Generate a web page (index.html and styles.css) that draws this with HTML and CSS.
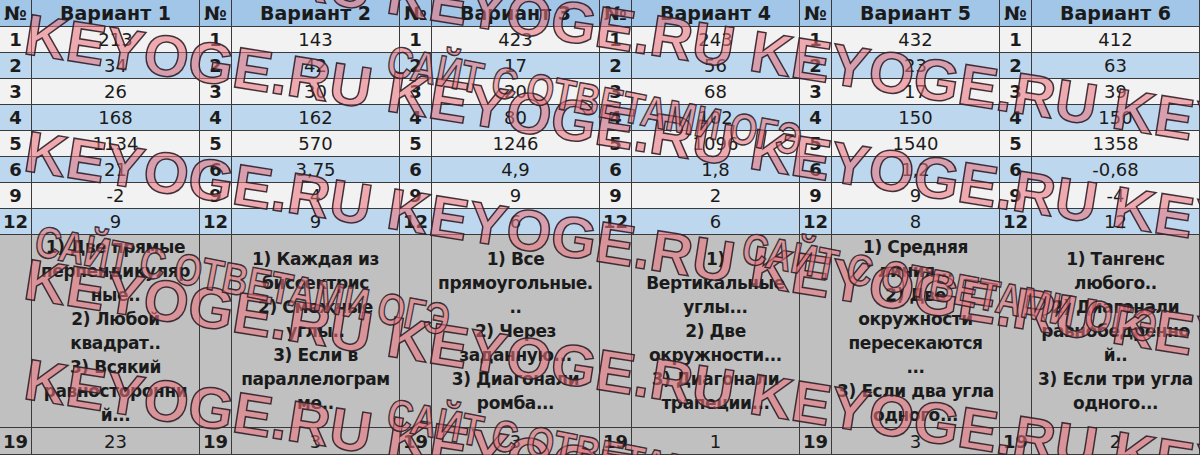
FILE: index.html
```html
<!DOCTYPE html>
<html lang="ru">
<head>
<meta charset="utf-8">
<title>Ответы</title>
<link rel="stylesheet" href="styles.css">
</head>
<body>
<div class="sheet">
  <div class="grid">
    <div class="row hd">
      <div class="c n">№</div><div class="c">Вариант 1</div>
      <div class="c n">№</div><div class="c">Вариант 2</div>
      <div class="c n">№</div><div class="c">Вариант 3</div>
      <div class="c n">№</div><div class="c">Вариант 4</div>
      <div class="c n">№</div><div class="c">Вариант 5</div>
      <div class="c n">№</div><div class="c">Вариант 6</div>
    </div>
    <div class="row w">
      <div class="c n">1</div><div class="c">213</div>
      <div class="c n">1</div><div class="c">143</div>
      <div class="c n">1</div><div class="c">423</div>
      <div class="c n">1</div><div class="c">243</div>
      <div class="c n">1</div><div class="c">432</div>
      <div class="c n">1</div><div class="c">412</div>
    </div>
    <div class="row b">
      <div class="c n">2</div><div class="c">34</div>
      <div class="c n">2</div><div class="c">42</div>
      <div class="c n">2</div><div class="c">17</div>
      <div class="c n">2</div><div class="c">56</div>
      <div class="c n">2</div><div class="c">23</div>
      <div class="c n">2</div><div class="c">63</div>
    </div>
    <div class="row w">
      <div class="c n">3</div><div class="c">26</div>
      <div class="c n">3</div><div class="c">30</div>
      <div class="c n">3</div><div class="c">20</div>
      <div class="c n">3</div><div class="c">68</div>
      <div class="c n">3</div><div class="c">17</div>
      <div class="c n">3</div><div class="c">39</div>
    </div>
    <div class="row b">
      <div class="c n">4</div><div class="c">168</div>
      <div class="c n">4</div><div class="c">162</div>
      <div class="c n">4</div><div class="c">80</div>
      <div class="c n">4</div><div class="c">102</div>
      <div class="c n">4</div><div class="c">150</div>
      <div class="c n">4</div><div class="c">150</div>
    </div>
    <div class="row w">
      <div class="c n">5</div><div class="c">1134</div>
      <div class="c n">5</div><div class="c">570</div>
      <div class="c n">5</div><div class="c">1246</div>
      <div class="c n">5</div><div class="c">1096</div>
      <div class="c n">5</div><div class="c">1540</div>
      <div class="c n">5</div><div class="c">1358</div>
    </div>
    <div class="row b">
      <div class="c n">6</div><div class="c">21</div>
      <div class="c n">6</div><div class="c">3,75</div>
      <div class="c n">6</div><div class="c">4,9</div>
      <div class="c n">6</div><div class="c">1,8</div>
      <div class="c n">6</div><div class="c">1,2</div>
      <div class="c n">6</div><div class="c">-0,68</div>
    </div>
    <div class="row w">
      <div class="c n">9</div><div class="c">-2</div>
      <div class="c n">9</div><div class="c">4</div>
      <div class="c n">9</div><div class="c">9</div>
      <div class="c n">9</div><div class="c">2</div>
      <div class="c n">9</div><div class="c">9</div>
      <div class="c n">9</div><div class="c">-4</div>
    </div>
    <div class="row b">
      <div class="c n">12</div><div class="c">9</div>
      <div class="c n">12</div><div class="c">9</div>
      <div class="c n">12</div><div class="c">6</div>
      <div class="c n">12</div><div class="c">6</div>
      <div class="c n">12</div><div class="c">8</div>
      <div class="c n">12</div><div class="c">12</div>
    </div>
    <div class="row g">
      <div class="c n"></div><div class="c t">1) Две прямые<br>перпендикуляр<br>ные..<br>2) Любой<br>квадрат..<br>3) Всякий<br>равносторонни<br>й...</div>
      <div class="c n"></div><div class="c t">1) Каждая из<br>биссектрис<br>2) Смежные<br>углы..<br>3) Если в<br>параллелограм<br>ме..</div>
      <div class="c n"></div><div class="c t">1) Все<br>прямоугольные.<br>..<br>2) Через<br>заданную...<br>3) Диагонали<br>ромба...</div>
      <div class="c n"></div><div class="c t">1)<br>Вертикальные<br>углы...<br>2) Две<br>окружности...<br>3) Диагонали<br>трапеции...</div>
      <div class="c n"></div><div class="c t">1) Средняя<br>линия...<br>2) Две<br>окружности<br>пересекаются<br>...<br>3) Если два угла<br>одного...</div>
      <div class="c n"></div><div class="c t">1) Тангенс<br>любого..<br>2) Диагонали<br>равнобедренно<br>й..<br>3) Если три угла<br>одного...</div>
    </div>
    <div class="row g">
      <div class="c n">19</div><div class="c">23</div>
      <div class="c n">19</div><div class="c">3</div>
      <div class="c n">19</div><div class="c">3</div>
      <div class="c n">19</div><div class="c">1</div>
      <div class="c n">19</div><div class="c">3</div>
      <div class="c n">19</div><div class="c">2</div>
    </div>
  </div>

  <div class="wm">
    <div class="k k0">KEYOGE.RU KEYOGE.RU KEYOGE.RU KEYOGE.RU</div>
    <div class="k k1">KEYOGE.RU KEYOGE.RU KEYOGE.RU KEYOGE.RU</div>
    <div class="k k2">KEYOGE.RU KEYOGE.RU KEYOGE.RU KEYOGE.RU</div>
    <div class="k k3">KEYOGE.RU KEYOGE.RU KEYOGE.RU KEYOGE.RU</div>
    <div class="k k4">KEYOGE.RU KEYOGE.RU KEYOGE.RU KEYOGE.RU</div>
    <div class="s s1">САЙТ С ОТВЕТАМИ ОГЭ</div>
    <div class="s s2">САЙТ С ОТВЕТАМИ ОГЭ</div>
    <div class="s s3">САЙТ С ОТВЕТАМИ ОГЭ</div>
    <div class="s s4">САЙТ С ОТВЕТАМИ ОГЭ</div>
  </div>
</div>
</body>
</html>
```

FILE: styles.css
```css
html, body {
  margin: 0;
  padding: 0;
  width: 1200px;
  height: 455px;
  overflow: hidden;
  background: #ffffff;
}

.sheet {
  position: relative;
  width: 1200px;
  height: 455px;
  overflow: hidden;
  font-family: "DejaVu Sans", "Liberation Sans", sans-serif;
  color: #1b1b1b;
}

.grid {
  display: grid;
  grid-template-columns: repeat(6, 32px 168px);
  grid-template-rows: 27px repeat(8, 26px) 193px 27px;
}

.row {
  display: contents;
}

.c {
  box-sizing: border-box;
  display: flex;
  align-items: center;
  justify-content: center;
  border-right: 1px solid #3a3a3a;
  border-bottom: 1px solid #3a3a3a;
  font-size: 18px;
  white-space: nowrap;
  overflow: visible;
}

.n {
  font-weight: bold;
}

.hd .c {
  background: #a2c6e8;
  font-weight: bold;
  font-size: 19px;
}

.w .c {
  background: #f2f2f2;
}

.b .c {
  background: #bdd7ee;
}

.g .c {
  background: #c0c0c0;
}

.c.t {
  flex-direction: column;
  font-weight: bold;
  font-size: 17px;
  letter-spacing: -0.4px;
  line-height: 24px;
  text-align: center;
}

/* watermark overlay */
.wm {
  position: absolute;
  left: 0;
  top: 0;
  width: 1200px;
  height: 455px;
  overflow: hidden;
  pointer-events: none;
}

.k,
.s {
  position: absolute;
  transform-origin: 0 0;
  white-space: nowrap;
  font-family: "Liberation Sans", Arial, sans-serif;
  font-weight: bold;
  line-height: 1;
  color: rgba(235, 115, 122, 0.56);
  -webkit-text-stroke: 1.5px rgba(45, 30, 40, 0.9);
}

.k {
  font-size: 58px;
  letter-spacing: 0.3px;
  transform: rotate(9deg);
  left: 30px;
}

.k0 { top: -93px; }
.k1 { top: 5px; }
.k2 { top: 122px; }
.k3 { top: 250px; }
.k4 { top: 350px; }

.s {
  font-size: 44px;
  transform: rotate(11deg) scaleX(0.8);
}

.s1 { left: 40px; top: 219px; }
.s2 { left: 392px; top: 39px; }
.s3 { left: 747px; top: 226px; }
.s4 { left: 392px; top: 392px; }
```
